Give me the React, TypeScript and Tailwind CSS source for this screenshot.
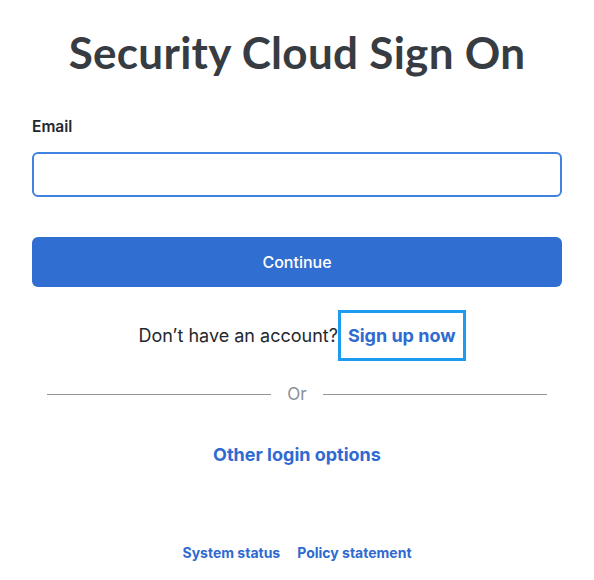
import React, { useState } from "react";

const App = () => {
  const [email, setEmail] = useState("");

  return (
    <div className="min-h-screen bg-white px-8 font-['Inter',sans-serif] text-[#23282e]">
      <h1 className="pt-[30px] text-center font-['Lato',sans-serif] text-[44px] font-bold leading-[44px] tracking-[0.3px] text-[#373c42]">
        Security Cloud Sign On
      </h1>

      <form className="mt-[44px]" onSubmit={(e) => e.preventDefault()}>
        <label htmlFor="email" className="block text-[15.5px] font-semibold leading-[18px]">
          Email
        </label>
        <input
          id="email"
          type="email"
          autoFocus
          value={email}
          onChange={(e) => setEmail(e.target.value)}
          className="mt-[16px] block h-[45px] w-full rounded-[6px] border-2 border-[#3f82e0] px-[6px] text-[16px] outline-none caret-[#23282e]"
        />

        <button
          type="submit"
          className="mt-[40px] block h-[50px] w-full rounded-[6px] bg-[#316ed2] text-[16px] font-medium text-white"
        >
          Continue
        </button>
      </form>

      <div className="mt-[33px] flex items-center justify-center text-[18px] leading-[27px]">
        <span>Don’t have an account?</span>
        <a
          href="#"
          className="ml-[10px] py-[2px] font-bold text-[#2f6ad0] outline-[3px] outline-offset-[7px] outline-solid outline-[#1c9bf0]"
        >
          Sign up now
        </a>
      </div>

      <div className="mt-[31px] flex items-center px-[15px] text-[17px] text-[#8a8f95]">
        <div className="h-px flex-1 bg-[#8f959b]" />
        <span className="px-[16px]">Or</span>
        <div className="h-px flex-1 bg-[#8f959b]" />
      </div>

      <div className="mt-[33px] text-center">
        <a href="#" className="text-[18px] font-bold text-[#2f6ad0]">
          Other login options
        </a>
      </div>

      <div className="mt-[74px] flex justify-center gap-[17px] text-[14px] font-bold text-[#2f6ad0]">
        <a href="#">System status</a>
        <a href="#">Policy statement</a>
      </div>
    </div>
  );
};

export default App;
